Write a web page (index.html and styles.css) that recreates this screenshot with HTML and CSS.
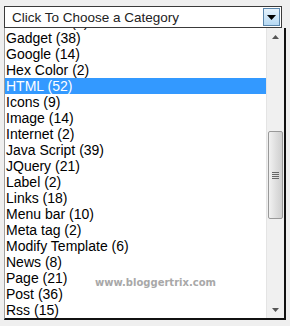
FILE: index.html
```html
<!DOCTYPE html>
<html lang="en">
<head>
    <meta charset="UTF-8">
    <title>Category Dropdown</title>
    <link rel="stylesheet" href="styles.css">
</head>
<body>
    <div class="combo">
        <div class="select-box">
            <span class="select-label">Click To Choose a Category</span>
            <span class="select-button">
                <svg width="9" height="5" viewBox="0 0 9 5"><path d="M0 0h9L4.5 5z" fill="#000"/></svg>
            </span>
        </div>
        <div class="list">
            <ul class="options">
                <li>Facebook (5)</li>
                <li>Gadget (38)</li>
                <li>Google (14)</li>
                <li>Hex Color (2)</li>
                <li class="selected">HTML (52)</li>
                <li>Icons (9)</li>
                <li>Image (14)</li>
                <li>Internet (2)</li>
                <li>Java Script (39)</li>
                <li>JQuery (21)</li>
                <li>Label (2)</li>
                <li>Links (18)</li>
                <li>Menu bar (10)</li>
                <li>Meta tag (2)</li>
                <li>Modify Template (6)</li>
                <li>News (8)</li>
                <li>Page (21)</li>
                <li>Post (36)</li>
                <li>Rss (15)</li>
            </ul>
            <div class="scrollbar">
                <span class="arrow">
                    <svg width="7" height="4" viewBox="0 0 7 4"><path d="M0 4h7L3.5 0z" fill="#555"/></svg>
                </span>
                <div class="track">
                    <div class="thumb">
                        <span class="grip"></span>
                    </div>
                </div>
                <span class="arrow">
                    <svg width="7" height="4" viewBox="0 0 7 4"><path d="M0 0h7L3.5 4z" fill="#555"/></svg>
                </span>
            </div>
            <div class="watermark">www.bloggertrix.com</div>
        </div>
    </div>
</body>
</html>
```
FILE: styles.css
```css
body {
    margin: 0;
    background: #efefef;
    font-family: "Liberation Sans", Arial, sans-serif;
}
.combo {
    padding: 6px 0 0 4px;
    width: 282px;
}
.select-box {
    width: 276px;
    height: 20px;
    border: 1px solid #3a3a3a;
    background: #fff;
    display: flex;
    align-items: center;
    justify-content: space-between;
}
.select-label {
    font-size: 13.5px;
    color: #222;
    padding-left: 7px;
}
.select-button {
    width: 15px;
    height: 16px;
    margin-right: 1px;
    border: 1px solid #5b87ad;
    background: linear-gradient(#e6f2fb, #b6d9f3);
    display: flex;
    align-items: center;
    justify-content: center;
}
.list {
    position: relative;
    height: 292px;
    background: #fff;
    border-left: 1px solid #a0a0a0;
    border-right: 2px solid #111;
    border-bottom: 2px solid #111;
    display: flex;
    overflow: hidden;
    box-sizing: border-box;
}
.options {
    flex: 1;
    list-style: none;
    margin: -14px 0 0;
    padding: 0;
    font-size: 14px;
}
.options li {
    height: 16px;
    line-height: 16px;
    padding-left: 1px;
    color: #000;
    white-space: nowrap;
}
.options li.selected {
    background: #3399ff;
    color: #fff;
}
.scrollbar {
    width: 17px;
    background: #f0f0f0;
    border-left: 1px solid #e4e4e4;
    display: flex;
    flex-direction: column;
}
.arrow {
    height: 17px;
    display: flex;
    align-items: center;
    justify-content: center;
}
.track {
    flex: 1;
    padding-top: 86px;
}
.thumb {
    margin: 0 1px;
    height: 86px;
    border: 1px solid #999;
    border-radius: 2px;
    background: linear-gradient(90deg, #f1f1f1, #dcdcdc 60%, #cfcfcf);
    display: flex;
    align-items: center;
    justify-content: center;
}
.grip {
    width: 7px;
    height: 7px;
    background: repeating-linear-gradient(#666 0 1px, transparent 1px 2px);
}
.watermark {
    position: absolute;
    left: 90px;
    top: 249px;
    font-family: "DejaVu Sans", Verdana, sans-serif;
    font-size: 10px;
    font-weight: bold;
    color: #a8a8a8;
}
```
